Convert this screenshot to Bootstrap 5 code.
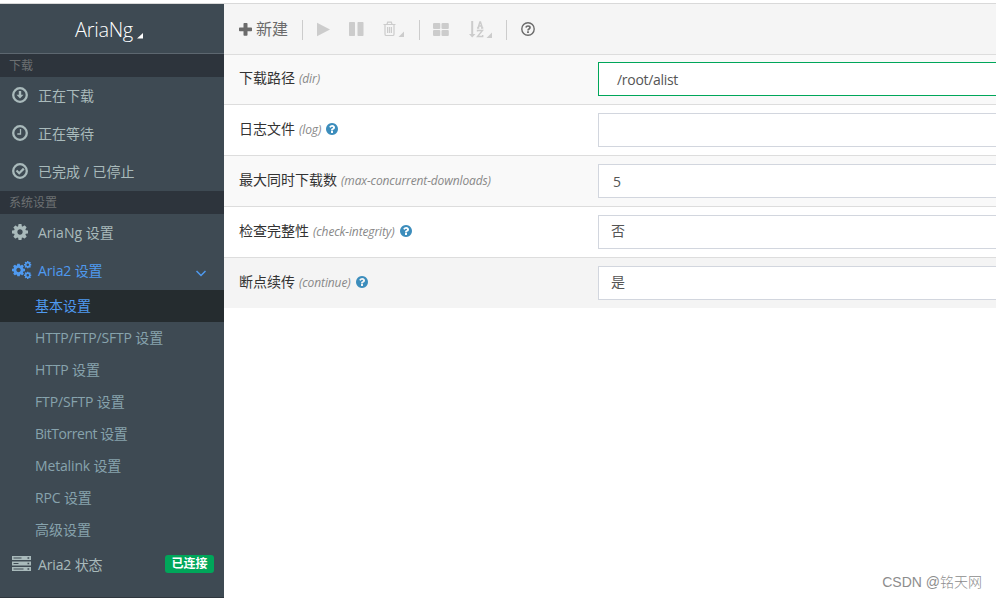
<!DOCTYPE html>
<html lang="zh-CN">
<head>
<meta charset="utf-8">
<meta name="viewport" content="width=device-width, initial-scale=1">
<title>AriaNg</title>
<link href="https://cdn.jsdelivr.net/npm/bootstrap@5.3.0/dist/css/bootstrap.min.css" rel="stylesheet">
<style>
  body { font-family: "Open Sans", "Noto Sans CJK SC", sans-serif; font-size: 14px; line-height: 20px; color: #333; height: 598px; }
  svg { display: block; flex: none; fill: currentColor; }
  .app { height: 595px; margin-top: 3px; border-top: 1px solid #d9d9d9; }
  .side { width: 224px; background: #3e4a53; color: #a9babb; border-bottom: 1px solid #2f373e; }
  .brand { height: 50px; border-bottom: 1px solid #5d6770; color: #fff; font-size: 20px; font-weight: 300; letter-spacing: -.3px; padding-left: 75px; padding-top: 2px; }
  .brand span { width: 58px; }
  .brand svg { margin: 12px 0 0 4px; }
  .section-title { height: 23px; background: #2d343c; color: #6c7072; font-size: 12px; padding-left: 9px; line-height: 23px; }
  .side-link { height: 38px; padding: 0 10px 0 12px; }
  .side-link > .ico { width: 26px; flex: none; margin-top: -3px; }
  .side-link.active { color: #4f9af0; }
  .sub-link { height: 32px; padding-left: 35px; color: #87a3ad; }
  .sub-link.active { background: #252c2f; color: #4f9af0; }
  .lat { letter-spacing: -.15px; }
  .tight { letter-spacing: -.45px; }
  .status { background: #00a65a; font-size: 12px; width: 49px; height: 18px; padding: 0; line-height: 18px; margin-top: -2px; border-radius: 3px; }
  .tools { height: 50px; background: #f5f5f5; color: #ccc; padding-left: 15px; }
  .tools .new-task { color: #6b6b6b; font-size: 16px; width: 49px; }
  .tools .new-task span { margin-left: 4px; }
  .sep { width: 1px; height: 20px; background: #ccc; margin: 1px 13px 0; }
  .sep.first { margin: 1px 14px 0; }
  .sep.second { margin-left: 15px; }
  .help-tool { color: #6b6b6b; }
  .setting { height: 51px; border-top: 1px solid #ddd; padding: 8px 0 0 15px; }
  .setting:nth-child(even) { background: #fff; }
  .setting:nth-child(odd) { background: #f9f9f9; }
  .setting:first-child { height: 50px; padding-top: 7px; }
  .setting:last-child { background: #f4f4f4; }
  .setting .name { width: 359px; height: 32px; }
  .setting em { color: #888; font-size: 12px; letter-spacing: -.12px; margin-left: 4px; position: relative; top: 1px; }
  .setting svg { color: #3c8dbc; margin-left: 5px; }
  .value { height: 34px; border: 1px solid #d2d6de; border-right: 0; background: #fff; color: #555; padding: 1px 0 0 14px; }
  .value.changed { border-color: #00a65a; padding-left: 18px; letter-spacing: -.3px; }
  .value.choice { padding: 0 0 2px 12px; }
  .credit { position: absolute; right: 14px; bottom: 6px; color: #8d8d8d; font-family: "Liberation Sans", "Noto Sans CJK SC", sans-serif; font-size: 14px; font-weight: 300; white-space: nowrap; }
</style>
</head>
<body class="bg-white overflow-hidden position-relative">
<svg width="0" height="0" class="position-absolute">
  <symbol id="cog" viewBox="128 128 1536 1536"><path d="M1152 896q0-106-75-181t-181-75-181 75-75 181 75 181 181 75 181-75 75-181zm512-109v222q0 12-8 23t-20 13l-185 28q-19 54-39 91 35 50 107 138 10 12 10 25t-9 23q-27 37-99 108t-94 71q-12 0-26-9l-138-108q-44 23-91 38-16 136-29 186-7 28-36 28h-222q-14 0-24.500-8.500t-11.500-21.500l-28-184q-49-16-90-37l-141 107q-10 9-25 9-14 0-25-11-126-114-165-168-7-10-7-23 0-12 8-23 15-21 51-66.500t54-70.500q-27-50-41-99l-183-27q-13-2-21-12.500t-8-23.500v-222q0-12 8-23t19-13l186-28q14-46 39-92-40-57-107-138-10-12-10-24 0-10 9-23 26-36 98.500-107.500t94.500-71.500q13 0 26 10l138 107q44-23 91-38 16-136 29-186 7-28 36-28h222q14 0 24.500 8.500t11.500 21.500l28 184q49 16 90 37l142-107q9-9 24-9 13 0 25 10 129 119 165 170 7 8 7 22 0 12-8 23-15 21-51 66.500t-54 70.500q26 50 41 98l183 28q13 2 21 12.500t8 23.500z"/></symbol>
  <symbol id="help" viewBox="128 128 1536 1536"><path d="M1024 1376v-192q0-14-9-23t-23-9h-192q-14 0-23 9t-9 23v192q0 14 9 23t23 9h192q14 0 23-9t9-23zm256-672q0-88-55.500-163t-138.500-116-170-41q-243 0-371 213-15 24 8 42l132 100q7 6 19 6 16 0 25-12 53-68 86-92 34-24 86-24 48 0 85.500 26t37.500 59q0 38-20 61t-68 45q-63 28-115.500 86.500t-52.500 125.500v36q0 14 9 23t23 9h192q14 0 23-9t9-23q0-19 21.500-49.500t54.500-49.500q32-18 49-28.500t46-35 44.500-48 28-60.500 12.500-81zm384 192q0 209-103 385.500t-279.500 279.500-385.500 103-385.500-103-279.500-279.500-103-385.500 103-385.500 279.500-279.500 385.500-103 385.500 103 279.500 279.500 103 385.500z"/></symbol>
</svg>
<div class="app d-flex">
  <aside class="side flex-shrink-0 d-flex flex-column">
    <div class="brand d-flex align-items-center"><span>AriaNg</span><svg width="6" height="6"><path d="M6 0v5.500H0z"/></svg></div>
    <div class="section-title">下载</div>
    <div class="side-link d-flex align-items-center"><span class="ico"><svg width="16" height="16" viewBox="0 0 16 16"><circle cx="8" cy="8" r="6.800" fill="none" stroke="currentColor" stroke-width="2.300"/><path d="M6.800 4h2.400v3.700h2.300L8 11.600 4.500 7.700h2.300z"/></svg></span><span>正在下载</span></div>
    <div class="side-link d-flex align-items-center"><span class="ico"><svg width="16" height="16" viewBox="0 0 16 16"><g fill="none" stroke="currentColor"><circle cx="8" cy="8" r="6.800" stroke-width="2.300"/><path d="M8.500 4v5H5.300" stroke-width="1.300"/></g></svg></span><span>正在等待</span></div>
    <div class="side-link d-flex align-items-center"><span class="ico"><svg width="16" height="16" viewBox="0 0 16 16"><g fill="none" stroke="currentColor"><circle cx="8" cy="8" r="6.800" stroke-width="2.300"/><path d="M4.500 7.500l2.700 2.700 4.600-4.600" stroke-width="2.200"/></g></svg></span><span>已完成 / 已停止</span></div>
    <div class="section-title">系统设置</div>
    <div class="side-link d-flex align-items-center"><span class="ico"><svg width="16" height="16"><use href="#cog"/></svg></span><span>AriaNg 设置</span></div>
    <div class="side-link active d-flex align-items-center"><span class="ico"><svg width="20" height="18"><use href="#cog" x="0" y="2.500" width="13" height="13"/><use href="#cog" x="12" y="0" width="7.500" height="7.500"/><use href="#cog" x="12" y="10.500" width="7.500" height="7.500"/></svg></span><span class="lat">Aria2 设置</span><svg class="ms-auto me-2 mt-1" width="10" height="7"><path d="M.5 1L5 5.500 9.500 1" fill="none" stroke="currentColor" stroke-width="1.500"/></svg></div>
    <div class="sub-link active d-flex align-items-center">基本设置</div>
    <div class="sub-link lat d-flex align-items-center">HTTP/FTP/SFTP 设置</div>
    <div class="sub-link lat d-flex align-items-center">HTTP 设置</div>
    <div class="sub-link lat d-flex align-items-center">FTP/SFTP 设置</div>
    <div class="sub-link tight d-flex align-items-center">BitTorrent 设置</div>
    <div class="sub-link lat d-flex align-items-center">Metalink 设置</div>
    <div class="sub-link lat d-flex align-items-center">RPC 设置</div>
    <div class="sub-link d-flex align-items-center">高级设置</div>
    <div class="side-link d-flex align-items-center"><span class="ico"><svg width="19" height="15"><path fill-rule="evenodd" d="M0 0h19v4H0zM1.500 1.500v1h8v-1zM15.500 1.300v1.400h1.700V1.300zM0 5.500h19v4H0zM1.500 7v1h5V7zM15.500 6.800v1.400h1.700V6.800zM0 11h19v4H0zM1.500 12.500v1h10v-1zM15.500 12.300v1.400h1.700v-1.400z"/></svg></span><span class="lat">Aria2 状态</span><span class="badge status ms-auto">已连接</span></div>
  </aside>
  <main class="flex-grow-1 overflow-hidden">
    <div class="tools d-flex align-items-center">
      <span class="new-task d-flex align-items-center"><svg width="13" height="13" viewBox="0 0 13 13"><path d="M5.300 0h2.400q.8 0 .8.800v3.700h3.700q.8 0 .8.800v2.200q0 .8-.8.800H8.500V12q0 .8-.8.800H5.300q-.8 0-.8-.8V8.300H.8q-.8 0-.8-.8V5.300q0-.8.800-.8h3.700V.8q0-.8.800-.8z"/></svg><span class="text-nowrap">新建</span></span>
      <i class="sep first"></i>
      <svg width="13" height="15"><path d="M0 .7v13.600L13 7.500z"/></svg>
      <svg class="ms-3" width="18" height="14"><rect x="3" width="6" height="14" rx=".7"/><rect x="11.500" width="6" height="14" rx=".7"/></svg>
      <svg class="ms-3" width="24" height="16"><g transform="translate(3)"><path d="M.5 3.500h12M4 3.200l.7-2h3.600l.7 2M2 4v9.200q0 1.300 1.200 1.300h6.600q1.200 0 1.200-1.300V4M4.600 6v6M6.500 6v6M8.400 6v6" fill="none" stroke="currentColor" stroke-width="1.200"/><path d="M21 10.500V16h-5.500z"/></g></svg>
      <i class="sep second"></i>
      <svg width="16" height="13"><rect width="7.300" height="6" rx="1"/><rect x="8.500" width="7.300" height="6" rx="1"/><rect y="7" width="7.300" height="6" rx="1"/><rect x="8.500" y="7" width="7.300" height="6" rx="1"/></svg>
      <svg class="ms-3" width="28" height="17"><g transform="translate(4)"><path d="M2.200 0h2v13h2.300L3.200 16.500 0 13h2.200z"/><path d="M8 7h2.300M12 7h2.300M9 7l1.900-6h.6l1.900 6M9.700 5h3M8.500 10.500V9.500h5L8.500 15.500h5.200V14" fill="none" stroke="currentColor" stroke-width="1.400"/><path d="M23 11.500V17h-5.500z"/></g></svg>
      <i class="sep"></i>
      <svg class="help-tool" width="15" height="14" viewBox="-1 0 15 14"><g fill="none" stroke="currentColor"><circle cx="7" cy="7" r="6.200" stroke-width="1.400"/><path d="M4.900 5.500Q5.300 4 7 4q2 0 2 1.500 0 .8-1 1.400Q7 7.500 7 8.500" stroke-width="1.700"/></g><path d="M6.100 9.300h1.800V11H6.100z"/></svg>
    </div>
    <div>
      <div class="setting d-flex"><div class="name d-flex align-items-center flex-shrink-0">下载路径<em>(dir)</em></div><div class="value changed flex-grow-1 d-flex align-items-center">/root/alist</div></div>
      <div class="setting d-flex"><div class="name d-flex align-items-center flex-shrink-0">日志文件<em>(log)</em><svg width="12" height="12"><use href="#help"/></svg></div><div class="value flex-grow-1"></div></div>
      <div class="setting d-flex"><div class="name d-flex align-items-center flex-shrink-0">最大同时下载数<em>(max-concurrent-downloads)</em></div><div class="value flex-grow-1 d-flex align-items-center">5</div></div>
      <div class="setting d-flex"><div class="name d-flex align-items-center flex-shrink-0">检查完整性<em>(check-integrity)</em><svg width="12" height="12"><use href="#help"/></svg></div><div class="value choice flex-grow-1 d-flex align-items-center">否</div></div>
      <div class="setting d-flex"><div class="name d-flex align-items-center flex-shrink-0">断点续传<em>(continue)</em><svg width="12" height="12"><use href="#help"/></svg></div><div class="value choice flex-grow-1 d-flex align-items-center">是</div></div>
    </div>
  </main>
</div>
<div class="credit">CSDN @铭天网</div>
<script src="https://cdn.jsdelivr.net/npm/bootstrap@5.3.0/dist/js/bootstrap.bundle.min.js"></script>
</body>
</html>
